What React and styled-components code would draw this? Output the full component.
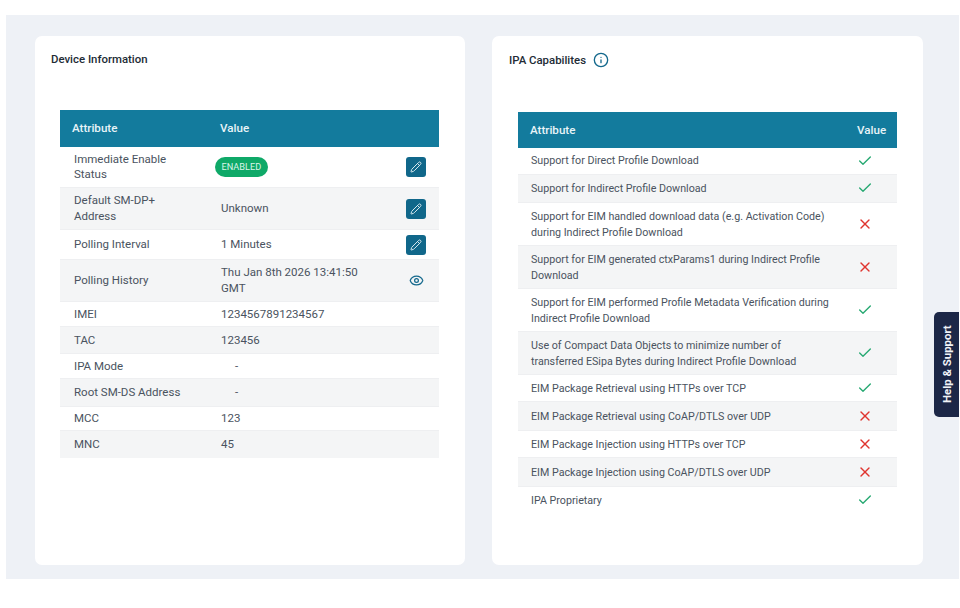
import React from "react";
import styled, { createGlobalStyle } from "styled-components";
import { Check, Eye, Info, Pencil, X } from "lucide-react";

const GlobalStyle = createGlobalStyle`
  html, body {
    margin: 0;
    background: #fff;
    font-family: Roboto, "Liberation Sans", sans-serif;
  }
`;

const Page = styled.main`
  box-sizing: border-box;
  display: grid;
  grid-template-columns: 430px 431px;
  gap: 27px;
  width: 953px;
  height: 564px;
  margin: 15px 0 0 6px;
  padding: 21px 0 14px 29px;
  background: #eef1f6;
`;

const Card = styled.section`
  box-sizing: border-box;
  padding: 16px 26px 0 ${(p) => p.$left}px;
  background: #fff;
  border-radius: 7px;
`;

const Title = styled.h2`
  display: flex;
  align-items: center;
  gap: 7px;
  min-height: 14px;
  margin: 0 0 44px -9px;
  color: #222b35;
  font-size: 11.4px;
  font-weight: 500;
  line-height: 14px;
`;

const InfoIcon = styled(Info)`
  width: 16px;
  height: 16px;
  color: #13688c;
`;

const Head = styled.div`
  box-sizing: border-box;
  display: grid;
  grid-template-columns: ${(p) => p.$columns};
  align-items: center;
  height: ${(p) => p.$height}px;
  padding: 0 0 ${(p) => p.$lift || 0}px 12px;
  background: #137b9d;
  color: #e8f4f8;
  font-size: 11.6px;
  font-weight: 500;
`;

const Row = styled.div`
  box-sizing: border-box;
  display: grid;
  grid-template-columns: ${(p) => p.$columns};
  align-items: center;
  height: ${(p) => p.$height}px;
  padding-left: ${(p) => p.$inset}px;
  background: ${(p) => (p.$even ? "#f4f5f6" : "#fff")};
  box-shadow: inset 0 -1px 0 #eeeff1;
  color: #4a5360;
  font-size: ${(p) => p.$size}px;
  line-height: ${(p) => p.$leading}px;

  &:last-child {
    box-shadow: none;
  }
`;

const Label = styled.div`
  padding-right: ${(p) => p.$gap}px;
`;

const Value = styled.div`
  padding: 0 16px 0 1px;
  ${(p) => p.$dash && "padding-left: 15px;"}
`;

const Badge = styled.span`
  display: inline-block;
  margin-left: -6px;
  padding: 0 6.5px;
  background: #0fa968;
  border-radius: 10px;
  color: #d8f5e8;
  font-size: 9.2px;
  line-height: 20px;
`;

const Action = styled.button`
  display: flex;
  align-items: center;
  justify-content: center;
  width: 20px;
  height: 20px;
  margin-left: 7px;
  padding: 0;
  background: ${(p) => (p.$plain ? "transparent" : "#10678a")};
  border: 0;
  border-radius: 3px;
  color: ${(p) => (p.$plain ? "#13688c" : "#d6e8ef")};
`;

const Mark = styled.div`
  display: flex;
  align-items: center;
  justify-content: center;
  width: 16px;
  margin-top: -1px;
  color: ${(p) => (p.$ok ? "#25a871" : "#e0352f")};
`;

const HelpTab = styled.button`
  position: absolute;
  top: 312px;
  left: 934px;
  width: 25px;
  height: 105px;
  padding: 0;
  background: #1c2747;
  border: 0;
  border-radius: 0 5px 5px 0;
  color: #f1f3f7;
  font-family: inherit;
  font-size: 11.4px;
  font-weight: 700;
  writing-mode: vertical-rl;
  transform: rotate(180deg);
`;

const deviceColumns = "146px 179px 1fr";
const capabilityColumns = "326px 1fr";

const deviceRows = [
  { label: "Immediate Enable Status", badge: "ENABLED", action: "edit", height: 40.5 },
  { label: "Default SM-DP+ Address", value: "Unknown", action: "edit", height: 42 },
  { label: "Polling Interval", value: "1 Minutes", action: "edit", height: 30 },
  { label: "Polling History", value: "Thu Jan 8th 2026 13:41:50 GMT", action: "view", height: 42.5 },
  { label: "IMEI", value: "1234567891234567", height: 25 },
  { label: "TAC", value: "123456", height: 27 },
  { label: "IPA Mode", dash: true, value: "-", height: 25 },
  { label: "Root SM-DS Address", dash: true, value: "-", height: 28 },
  { label: "MCC", value: "123", height: 24 },
  { label: "MNC", value: "45", height: 27 },
];

const capabilities = [
  { text: "Support for Direct Profile Download", ok: true, height: 26.5 },
  { text: "Support for Indirect Profile Download", ok: true, height: 28.5 },
  { text: "Support for EIM handled download data (e.g. Activation Code) during Indirect Profile Download", ok: false, height: 43 },
  { text: "Support for EIM generated ctxParams1 during Indirect Profile Download", ok: false, height: 43 },
  { text: "Support for EIM performed Profile Metadata Verification during Indirect Profile Download", ok: true, height: 43 },
  { text: "Use of Compact Data Objects to minimize number of transferred ESipa Bytes during Indirect Profile Download", ok: true, height: 43 },
  { text: "EIM Package Retrieval using HTTPs over TCP", ok: true, height: 27 },
  { text: "EIM Package Retrieval using CoAP/DTLS over UDP", ok: false, height: 29 },
  { text: "EIM Package Injection using HTTPs over TCP", ok: false, height: 27 },
  { text: "EIM Package Injection using CoAP/DTLS over UDP", ok: false, height: 29 },
  { text: "IPA Proprietary", ok: true, height: 27 },
];

const App = () => {
  return (
    <>
      <GlobalStyle />
      <Page>
        <Card $left={25}>
          <Title>Device Information</Title>
          <Head $columns="148px 1fr" $height={37} $lift={1}>
            <div>Attribute</div>
            <div>Value</div>
          </Head>
          {deviceRows.map((row, i) => (
            <Row
              key={row.label}
              $columns={deviceColumns}
              $height={row.height}
              $even={i % 2 === 1}
              $inset={14}
              $size={11.5}
              $leading={15.6}
            >
              <Label $gap={20}>{row.label}</Label>
              <Value $dash={row.dash}>
                {row.badge ? <Badge>{row.badge}</Badge> : row.value}
              </Value>
              {row.action && (
                <Action $plain={row.action === "view"}>
                  {row.action === "edit" ? <Pencil size={12} /> : <Eye size={15} />}
                </Action>
              )}
            </Row>
          ))}
        </Card>
        <Card $left={26}>
          <Title>
            IPA Capabilites
            <InfoIcon />
          </Title>
          <Head $columns="327px 1fr" $height={36}>
            <div>Attribute</div>
            <div>Value</div>
          </Head>
          {capabilities.map((row, i) => (
            <Row
              key={row.text}
              $columns={capabilityColumns}
              $height={row.height}
              $even={i % 2 === 1}
              $inset={13}
              $size={10.7}
              $leading={16}
            >
              <Label $gap={22}>{row.text}</Label>
              <Mark $ok={row.ok}>
                {row.ok ? <Check size={16} /> : <X size={18} />}
              </Mark>
            </Row>
          ))}
        </Card>
      </Page>
      <HelpTab>Help &amp; Support</HelpTab>
    </>
  );
};

export default App;
